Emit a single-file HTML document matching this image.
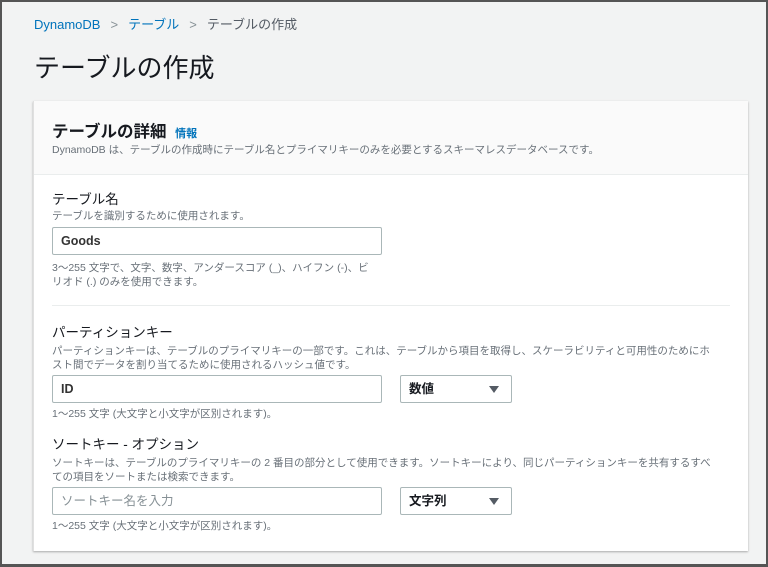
<!DOCTYPE html>
<html><head><meta charset="utf-8"><style>
*{margin:0;padding:0;box-sizing:border-box}
body{width:768px;height:567px;overflow:hidden;background:#f2f3f3;font-family:"Liberation Sans","Noto Sans CJK JP",sans-serif;color:#16191f;position:relative}
.frame{position:absolute;left:0;top:0;width:768px;height:567px;border:2px solid #555;border-bottom-width:3px;pointer-events:none}
.abs{position:absolute;white-space:nowrap}
.bc{top:14px;left:34px;font-size:13px;color:#545b64}
.bc a{color:#0073bb;text-decoration:none}
.bc .s{color:#879196;margin:0 10px}
h1{position:absolute;left:34px;top:48px;font-size:26px;font-weight:400;color:#16191f}
.card{position:absolute;left:33px;top:101px;width:715px;height:450px;background:#fff;box-shadow:0 1px 2px rgba(0,0,0,.3);border-left:1px solid #e0e0e0}
.hd{height:74px;background:#fafafa;border-bottom:1px solid #eaeded;position:relative}
.lbl{font-size:13.5px;color:#16191f;line-height:16px}
.d{font-size:10.5px;color:#687078;line-height:14px}
.in{position:absolute;left:18px;width:330px;height:28px;border:1px solid #aab7b8;border-radius:2px;font-size:12.5px;line-height:16px;padding:5px 8px;background:#fff}
.sel{position:absolute;left:366px;width:112px;height:28px;border:1px solid #aab7b8;border-radius:2px;font-size:12.5px;line-height:16px;padding:5px 8px;background:#fff}
.sel:after{content:"";position:absolute;right:12px;top:10px;border-left:5px solid transparent;border-right:5px solid transparent;border-top:7px solid #545b64}
</style></head><body>
<div class="abs bc"><a>DynamoDB</a><span class="s">&gt;</span><a>テーブル</a><span class="s">&gt;</span>テーブルの作成</div>
<h1>テーブルの作成</h1>
<div class="card">
 <div class="hd">
  <div class="abs" style="left:18px;top:17px;font-size:16.5px;font-weight:bold">テーブルの詳細 <span style="font-size:11px;color:#0073bb;margin-left:4px">情報</span></div>
  <div class="abs d" style="left:18px;top:42px">DynamoDB は、テーブルの作成時にテーブル名とプライマリキーのみを必要とするスキーマレスデータベースです。</div>
 </div>
 <div class="abs lbl" style="left:18px;top:91px">テーブル名</div>
 <div class="abs d" style="left:18px;top:108px">テーブルを識別するために使用されます。</div>
 <div class="in" style="top:126px;font-weight:bold;color:#333">Goods</div>
 <div class="abs d" style="left:18px;top:160px">3～255 文字で、文字、数字、アンダースコア (_)、ハイフン (-)、ビ<br>リオド (.) のみを使用できます。</div>
 <div class="abs" style="left:18px;top:204px;width:678px;border-top:1px solid #eaeded"></div>
 <div class="abs lbl" style="left:18px;top:224px">パーティションキー</div>
 <div class="abs d" style="left:18px;top:243px">パーティションキーは、テーブルのプライマリキーの一部です。これは、テーブルから項目を取得し、スケーラビリティと可用性のためにホ<br>スト間でデータを割り当てるために使用されるハッシュ値です。</div>
 <div class="in" style="top:274px;font-weight:bold;color:#333">ID</div>
 <div class="sel" style="top:274px;font-weight:bold">数値</div>
 <div class="abs d" style="left:18px;top:306px">1～255 文字 (大文字と小文字が区別されます)。</div>
 <div class="abs lbl" style="left:18px;top:336px">ソートキー - オプション</div>
 <div class="abs d" style="left:18px;top:355px">ソートキーは、テーブルのプライマリキーの 2 番目の部分として使用できます。ソートキーにより、同じパーティションキーを共有するすべ<br>ての項目をソートまたは検索できます。</div>
 <div class="in" style="top:386px;color:#879196">ソートキー名を入力</div>
 <div class="sel" style="top:386px;font-weight:bold">文字列</div>
 <div class="abs d" style="left:18px;top:418px">1～255 文字 (大文字と小文字が区別されます)。</div>
</div>
<div class="frame"></div>
</body></html>
